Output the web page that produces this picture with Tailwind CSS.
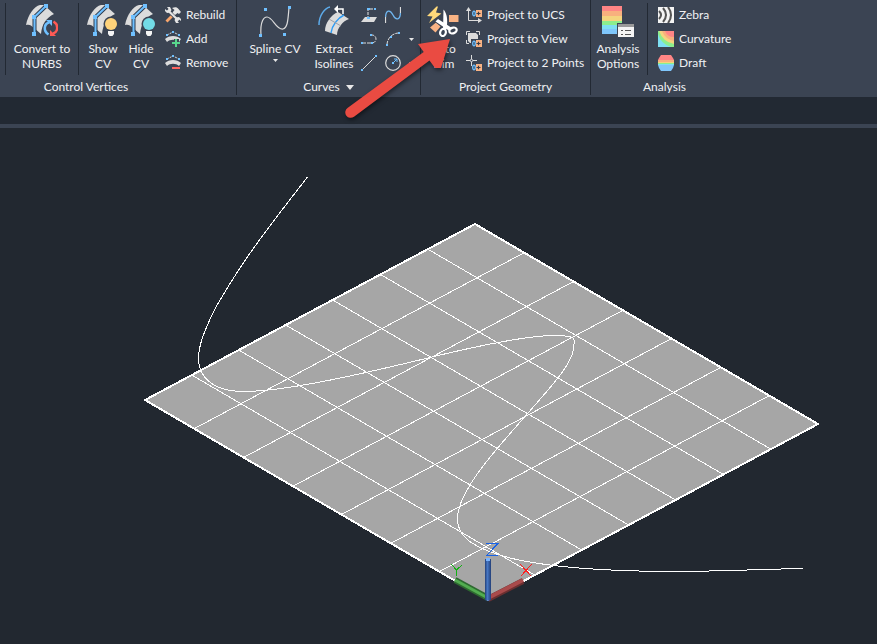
<!DOCTYPE html>
<html lang="en">
<head>
<meta charset="utf-8">
<meta name="viewport" content="width=device-width, initial-scale=1">
<title>Surface modeling</title>
<script src="https://cdn.jsdelivr.net/npm/@tailwindcss/browser@4"></script>
</head>
<body class="flex min-h-screen flex-col bg-[#222830] font-['Lato','Open_Sans',sans-serif] text-xs text-[#f0f1f3]">

<!-- Shared icon shapes -->
<svg class="hidden" aria-hidden="true">
  <symbol id="surface" viewBox="0 0 32 34">
    <path d="M0 22C2 12 8 3 14 2h4l10 9c-8 4-12 10-13 20l-7-6C5 22 3 21 0 22z" fill="#dcdcdc"/>
    <path d="M8.500 31V14L20 3" fill="none" stroke="#2d3c50" stroke-width="4"/>
    <path d="M8.500 31V14L20 3" fill="none" stroke="#6fc0ff" stroke-width="2"/>
    <path d="M18 1h4v4h-4zM6 12h4v4H6zM6 29h4v4H6z" fill="#6fc0ff"/>
  </symbol>
  <symbol id="target" viewBox="0 0 10 7">
    <path d="M4 0h6v7H4z" fill="#f9b384"/>
    <ellipse cx="2" cy="3.500" rx="1.300" ry="2.400" fill="none" stroke="#6fc0ff" stroke-width="1.300"/>
    <path d="M4.500 3.500h4M6.500 1.800v3.400" stroke="#3b3b44" stroke-width="1.200"/>
  </symbol>
  <symbol id="vertices" viewBox="0 0 16 16">
    <path d="M2 4L8 1l6 3" fill="none" stroke="#dcdcdc" stroke-dasharray="2 1"/>
    <path d="M1 3h2v2H1zM7 0h2v2H7zM13 3h2v2h-2z" fill="#6fc0ff"/>
    <path d="M0 8c4-4 12-4 16 0l-2 3c-3-3-9-3-12 0z" fill="#dcdcdc"/>
  </symbol>
</svg>

<header class="relative bg-[#3b4453]">
  <div class="flex h-[97px] items-stretch overflow-hidden" role="toolbar" aria-label="Surface ribbon">

    <section class="flex w-[236px] shrink-0 flex-col" aria-label="Control Vertices">
      <div class="flex h-[75px] pt-[3px]">
        <div class="ml-[5px] w-px bg-[#222933]"></div>
        <button class="flex w-[72px] flex-col items-center leading-[15px]">
          <svg class="h-[34px] w-8 shrink-0" viewBox="0 0 32 34" aria-hidden="true"><use href="#surface" width="32" height="34"/>
            <circle cx="25" cy="25" r="8" fill="#3b4453"/>
            <path d="M22.500 31.500C17 28 18 21 23 19.500" fill="none" stroke="#6fc0ff" stroke-width="2.500"/><path d="M20 17h6v6z" fill="#6fc0ff"/>
            <path d="M27.500 18.500C33 22 32 29 27 30.500" fill="none" stroke="#ff5a55" stroke-width="2.500"/><path d="M30 33h-6v-6z" fill="#ff5a55"/>
          </svg>
          <span class="mt-1">Convert to<br>NURBS</span>
        </button>
        <div class="w-px bg-[#222933]"></div>
        <button class="ml-[5px] flex w-[38px] flex-col items-center leading-[15px]">
          <svg class="h-[34px] w-8 shrink-0" viewBox="0 0 32 34" aria-hidden="true"><use href="#surface" width="32" height="34"/>
            <circle cx="24" cy="21" r="7.500" fill="#3b4453"/><circle cx="24" cy="21" r="6" fill="#ffd37a"/><path d="M21 28h6v3l-1.500 2h-3L21 31z" fill="#f4f4f4"/>
          </svg>
          <span class="mt-1">Show<br>CV</span>
        </button>
        <button class="flex w-[38px] flex-col items-center leading-[15px]">
          <svg class="h-[34px] w-8 shrink-0" viewBox="0 0 32 34" aria-hidden="true"><use href="#surface" width="32" height="34"/>
            <circle cx="24" cy="21" r="7.500" fill="#3b4453"/><circle cx="24" cy="21" r="6" fill="#72dbe6"/><path d="M21 28h6v3l-1.500 2h-3L21 31z" fill="#f4f4f4"/>
          </svg>
          <span class="mt-1">Hide<br>CV</span>
        </button>
        <div class="ml-[5px] flex flex-col whitespace-nowrap">
          <button class="flex h-6 items-center gap-[5px]">
            <svg class="size-4" viewBox="0 0 16 16" aria-hidden="true">
              <path d="M1.500 14.500L9 7" stroke="#f9a66c" stroke-width="2.800"/>
              <path d="M3.500 4l10 9.500" stroke="#3b4453" stroke-width="3.600"/>
              <path d="M3 3.500l10.500 10" stroke="#e4e4e4" stroke-width="2.200"/>
              <path d="M0 2l2 1.500L3.500 2 2 0h3l1.500 3L5 5.500 2 6 0 4z" fill="#e4e4e4"/>
              <path d="M16 14l-2-1.500-1.500 1.500L14 16h-3l-1.500-3L11 10.500l3-.5 2 2z" fill="#e4e4e4"/>
              <path d="M7 1c3-1 5-1 6.500 1L16 5l-2 2-1.500-1-2.500 2-2.500-2.500L9.500 3z" fill="#e4e4e4"/>
            </svg>Rebuild</button>
          <button class="flex h-6 items-center gap-[5px]">
            <svg class="size-4" viewBox="0 0 16 16" aria-hidden="true"><use href="#vertices" width="16" height="16"/><path d="M6 11h3V8h5v3h2v5H6z" fill="#3b4453"/><path d="M7 12h8M11 8v8" stroke="#58d68d" stroke-width="2"/></svg>Add</button>
          <button class="flex h-6 items-center gap-[5px]">
            <svg class="size-4" viewBox="0 0 16 16" aria-hidden="true"><use href="#vertices" width="16" height="16"/><path d="M7 13h8" stroke="#ff6560" stroke-width="2"/></svg>Remove</button>
        </div>
      </div>
      <h2 class="pr-16 text-center leading-6">Control Vertices</h2>
    </section>

    <div class="mb-[2px] w-px shrink-0 bg-[#222933]"></div>

    <section class="flex w-[183px] shrink-0 flex-col" aria-label="Curves">
      <div class="flex h-[75px] pt-[3px]">
        <button class="ml-[6px] flex w-16 flex-col items-center leading-[15px]">
          <svg class="h-[34px] w-8 shrink-0" viewBox="0 0 32 34" aria-hidden="true">
            <path d="M2 32C1 18 5 14 8 14c6 0 9 13 16 12 5-1 5-11 6-21" fill="none" stroke="#dcdcdc" stroke-width="1.200"/>
            <path d="M5 5h3v3H5zM29 3h3v3h-3zM0 31h3v3H0zM24 30h3v3h-3z" fill="#6fc0ff"/>
          </svg>
          <span class="mt-1">Spline CV</span>
          <svg class="mt-[3px] h-[3px] w-[5px]" viewBox="0 0 5 3" aria-hidden="true"><path d="M0 0h5L2.500 3z" fill="#e8e8e8"/></svg>
        </button>
        <button class="ml-px flex w-[52px] flex-col items-center leading-[15px]">
          <svg class="h-[34px] w-8 shrink-0" viewBox="0 0 32 34" aria-hidden="true">
            <path d="M1 22C1 12 7 5 12 4" fill="none" stroke="#5dabea" stroke-width="1.500"/>
            <path d="M7 28C7 20 13 12 20 9l11 7c-6 2-12 9-12 16z" fill="#dcdcdc"/>
            <path d="M13 30c1-8 7-15 13-18" fill="none" stroke="#2f9cf4" stroke-width="1.500"/><path d="M11 16l12 7" stroke="#9da1a8"/>
            <path d="M19 6h6v5" fill="none" stroke="#fff" stroke-width="1.500"/><path d="M16 6l4-4v8z" fill="#fff"/>
          </svg>
          <span class="mt-1">Extract<br>Isolines</span>
        </button>
        <div class="ml-px grid grid-cols-[16px_16px_5px] grid-rows-[24px_24px_24px] items-center gap-x-2">
          <button aria-label="Curve blend"><svg class="size-4" viewBox="0 0 16 16" aria-hidden="true"><path d="M4 10h12l-3 5H0z" fill="#dcdcdc"/><path d="M7 12V2h6" fill="none" stroke="#e8e8e8" stroke-dasharray="3 1"/><path d="M6 1h3v2H6zM13 1h2v2h-2zM6 10h3v2H6z" fill="#6fc0ff"/></svg></button>
          <button aria-label="Spline knots"><svg class="size-4" viewBox="0 0 16 16" aria-hidden="true"><path d="M.5 16V9M15.500 0v7" fill="none" stroke="#dcdcdc" stroke-width="1.200"/><path d="M.5 10C1 3 5 2 8 8s7 5 7.500-2" fill="none" stroke="#6fb6f0" stroke-width="1.300"/></svg></button>
          <span></span>
          <button aria-label="Polyline"><svg class="size-4" viewBox="0 0 16 16" aria-hidden="true"><path d="M1 12h10a4 4 0 0 0 0-8" fill="none" stroke="#dcdcdc" stroke-dasharray="4 1"/><path d="M0 11h2v2H0zM10 11h2v2h-2zM9 3h2v2H9z" fill="#6fc0ff"/></svg></button>
          <button aria-label="Arc"><svg class="size-4" viewBox="0 0 16 16" aria-hidden="true"><path d="M2 14C2 8 7 2 14 2" fill="none" stroke="#dcdcdc" stroke-dasharray="4 1"/><path d="M1 13h2v2H1zM5 5h2v2H5zM13 1h2v2h-2z" fill="#6fc0ff"/></svg></button>
          <button aria-label="More arcs"><svg class="h-[3px] w-[5px]" viewBox="0 0 5 3" aria-hidden="true"><path d="M0 0h5L2.500 3z" fill="#e8e8e8"/></svg></button>
          <button aria-label="Line"><svg class="size-4" viewBox="0 0 16 16" aria-hidden="true"><path d="M1 15L15 1" stroke="#dcdcdc"/><path d="M0 14h2v2H0zM14 0h2v2h-2z" fill="#6fc0ff"/></svg></button>
          <button aria-label="Circle"><svg class="size-4" viewBox="0 0 16 16" aria-hidden="true"><circle cx="8" cy="8" r="7.300" fill="none" stroke="#dcdcdc" stroke-width="1.200"/><path d="M7 7h2v2H7z" fill="#6fc0ff"/><path d="M9 7l3-3M9 4h3v3" fill="none" stroke="#6fc0ff"/></svg></button>
          <button aria-label="More circles"><svg class="h-[3px] w-[5px]" viewBox="0 0 5 3" aria-hidden="true"><path d="M0 0h5L2.500 3z" fill="#e8e8e8"/></svg></button>
        </div>
      </div>
      <button class="flex items-center justify-center gap-[6px] leading-6">Curves
        <svg class="h-[5px] w-2" viewBox="0 0 8 5" aria-hidden="true"><path d="M0 0h8L4 5z" fill="#e8e8e8"/></svg>
      </button>
    </section>

    <div class="mb-[2px] w-px shrink-0 bg-[#222933]"></div>

    <section class="flex w-[169px] shrink-0 flex-col" aria-label="Project Geometry">
      <div class="flex h-[75px] pt-[3px]">
        <button class="flex w-11 flex-col items-center leading-[15px]">
          <svg class="h-[34px] w-8 shrink-0" viewBox="0 0 32 34" aria-hidden="true">
            <path d="M9.500 3.500L0 13l5.500.5L2 20l12.500-9.500-5.500-1 2-6z" fill="#ffd97a"/>
            <path d="M3 24.500l6-5 4.500 4-5 6z" fill="#f9b384"/><path d="M22 12h9.500v7H22z" fill="#f9b384"/>
            <path d="M17 7v19M9 17l14 9" fill="none" stroke="#3b4453" stroke-width="5"/>
            <path d="M16.500 6.500c3.500 4 4.500 10 3 20l-3.500.5z" fill="#fff"/>
            <path d="M8.500 18.500l2.500-2.500 14 9-2.500 3z" fill="#fff"/>
            <ellipse cx="16" cy="29.500" rx="2.800" ry="3.600" fill="#3b4453" stroke="#fff" stroke-width="2.200" transform="rotate(15 16 29.500)"/>
            <ellipse cx="26" cy="27.500" rx="3.800" ry="2.800" fill="#3b4453" stroke="#fff" stroke-width="2.200" transform="rotate(-20 26 27.500)"/>
          </svg>
          <span class="mt-1">Auto<br>Trim</span>
        </button>
        <div class="ml-px flex flex-col whitespace-nowrap">
          <button class="flex h-6 items-center gap-[5px]">
            <svg class="size-4" viewBox="0 0 16 16" aria-hidden="true"><path d="M2.500 2v11.500H14" fill="none" stroke="#dcdcdc"/><path d="M0 4l2.500-4L5 4zM12 11l4 2.500-4 2.500z" fill="#dcdcdc"/><use href="#target" x="6" y="3" width="10" height="7"/></svg>Project to UCS</button>
          <button class="flex h-6 items-center gap-[5px]">
            <svg class="size-4" viewBox="0 0 16 16" aria-hidden="true"><path d="M.5 4V.5H4M10 .5h3.500V4M.5 9v3.500H3" fill="none" stroke="#dcdcdc"/><path d="M2 2h8l2 2v5H8v3H4l-2-2z" fill="#dcdcdc"/><path d="M5 8h11v8H5z" fill="#3b4453"/><use href="#target" x="6" y="9" width="10" height="7"/></svg>Project to View</button>
          <button class="flex h-6 items-center gap-[5px]">
            <svg class="size-4" viewBox="0 0 16 16" aria-hidden="true"><path d="M5.500 0v4M5.500 7v4M0 5.500h4M7 5.500h4" stroke="#dcdcdc"/><path d="M4.500 4.500h2v2h-2z" fill="none" stroke="#aeb2ba"/><use href="#target" x="6" y="9" width="10" height="7"/></svg>Project to 2 Points</button>
        </div>
      </div>
      <h2 class="text-center leading-6">Project Geometry</h2>
    </section>

    <div class="mb-[2px] w-px shrink-0 bg-[#222933]"></div>

    <section class="flex w-[147px] shrink-0 flex-col" aria-label="Analysis">
      <div class="flex h-[75px] pt-[3px]">
        <button class="flex w-14 flex-col items-center pr-[2px] leading-[15px]">
          <svg class="h-[34px] w-8 shrink-0" viewBox="0 0 32 34" aria-hidden="true">
            <path d="M0 3h20v6H0z" fill="#ff8585"/><path d="M0 8h20v6H0z" fill="#f8b07e"/><path d="M0 13h20v5H0z" fill="#f4d47e"/><path d="M0 18h20v5H0z" fill="#8cee8c"/><path d="M0 22h20v4H0z" fill="#7edff2"/><path d="M0 26h20v5H0z" fill="#7fc6fb"/>
            <path d="M15 20h17v14H15z" fill="#3b4453"/><path d="M16 21h16v13H16z" fill="#f4f4f4"/><path d="M16 21h16v3H16z" fill="#999"/><path d="M19 27.500h2M23 27.500h6M19 31.500h2M23 31.500h6" stroke="#555"/>
          </svg>
          <span class="mt-1">Analysis<br>Options</span>
        </button>
        <div class="w-px bg-[#222933]"></div>
        <div class="ml-[10px] flex flex-col whitespace-nowrap">
          <button class="flex h-6 items-center gap-[5px]">
            <svg class="size-4" viewBox="0 0 16 16" aria-hidden="true"><path d="M0 0h16v16H0z" fill="#f4f4f4"/><path d="M1 4q4 4 0 8M5 1q6 7 0 14M10 0q6 8 0 16" fill="none" stroke="#555" stroke-width="2"/></svg>Zebra</button>
          <button class="flex h-6 items-center gap-[5px]">
            <svg class="size-4" viewBox="0 0 16 16" aria-hidden="true"><path d="M0 0h16v16H0z" fill="#7edff2"/><path d="M0 0h16v16h-3Q3 13 0 3z" fill="#8cee8c"/><path d="M1 0h15v13Q5 11 1 0z" fill="#f4d47e"/><path d="M4 0h12v10Q7 8 4 0z" fill="#f8b07e"/><path d="M7 0h9v6Q9 6 7 0z" fill="#ff8585"/></svg>Curvature</button>
          <button class="flex h-6 items-center gap-[5px]">
            <svg class="size-4" viewBox="0 0 16 16" aria-hidden="true"><path d="M3 0h10l2 3 1 2H0l1-2z" fill="#ff8585"/><path d="M0 5h16v2H0z" fill="#f8b07e"/><path d="M0 7h16v1H0z" fill="#f4d47e"/><path d="M0 8h16v1H0z" fill="#8cee8c"/><path d="M0 9h16v1H0z" fill="#7edff2"/><path d="M0 10h16l-1 3-2 3H3l-2-3z" fill="#7fc6fb"/></svg>Draft</button>
        </div>
      </div>
      <h2 class="text-center leading-6">Analysis</h2>
    </section>
  </div>

  <!-- Callout arrow pointing at Auto Trim -->
  <svg class="pointer-events-none absolute left-[340px] top-[30px] h-[95px] w-[120px] drop-shadow-[1px_2px_2px_rgba(0,0,0,0.5)]" viewBox="340 30 120 95" aria-hidden="true">
    <path d="M450 39L418 44l5.700 8L347.500 108a5.300 5.300 0 0 0 6.500 8.800L429.500 60.500l5.500 7.500 6 0z" fill="#ea4b42"/>
  </svg>
</header>

<div class="h-[27px] bg-[#222933]"></div>
<div class="h-1 bg-[#3b4453]"></div>

<main class="min-h-0 flex-1">
  <svg class="block w-full" viewBox="0 128 877 516" role="img" aria-label="Surface with projected spline curve">
    <defs>
      <linearGradient id="zAxis"><stop offset="0" stop-color="#234079"/><stop offset=".4" stop-color="#4777c4"/><stop offset="1" stop-color="#233f78"/></linearGradient>
    </defs>
    <g shape-rendering="crispEdges" stroke="#fff" fill="none">
      <path d="M145 400L475 224l343 200L488 600z" fill="#a6a6a6" stroke-width="2"/>
      <path d="M192.500 375.500l343 200M239.500 350.500l343 200M286.500 325.500l343 200M333.500 300.500l343 200M380.500 274.500l343 200M428.500 249.500l343 200"/>
      <path d="M194.500 428.500l330-176M243.500 457.500l330-176M292.500 486.500l330-176M341.500 514.500l330-176M390.500 543.500l330-176M439.500 571.500l330-176"/>
      <path d="M307.500 177C282 210 258 240 240 268S218 302 212 315S198 345 198.500 360S210 391.500 245 391.500C290 391 370 372 432 357S530 335.500 555 335.500S574 341 573.500 347C574 362 550 388 528 413C505 440 458 488 457.500 518C457 540 480 550 510 558C560 570 640 571.500 680 571.500C730 571 770 569 803 568.500"/>
    </g>
    <g stroke-linecap="butt" fill="none">
      <path d="M488 599l35-18" stroke="#6b2f30" stroke-width="6"/><path d="M488 598l35-18" stroke="#a94a4b" stroke-width="4"/>
      <path d="M488 598l-33-18" stroke="#2e6a30" stroke-width="6"/><path d="M488 598l-33-18" stroke="#52ad50" stroke-width="3"/>
      <path d="M485 559h6v41l-3 1-3-1z" fill="url(#zAxis)"/><path d="M486 558h4v3h-4z" fill="#7ab4ff"/>
      <g shape-rendering="crispEdges">
        <path d="M486 543.500h12L486.500 555.500H498" stroke="#1762e6"/>
        <path d="M520.500 564.500l11 12M531.500 564.500l-11 12" stroke="#ff1f1f"/>
        <path d="M451.500 564.500l5 5.500v6M462.500 564.500l-6 5.500" stroke="#12b212"/>
      </g>
    </g>
  </svg>
</main>
</body>
</html>
